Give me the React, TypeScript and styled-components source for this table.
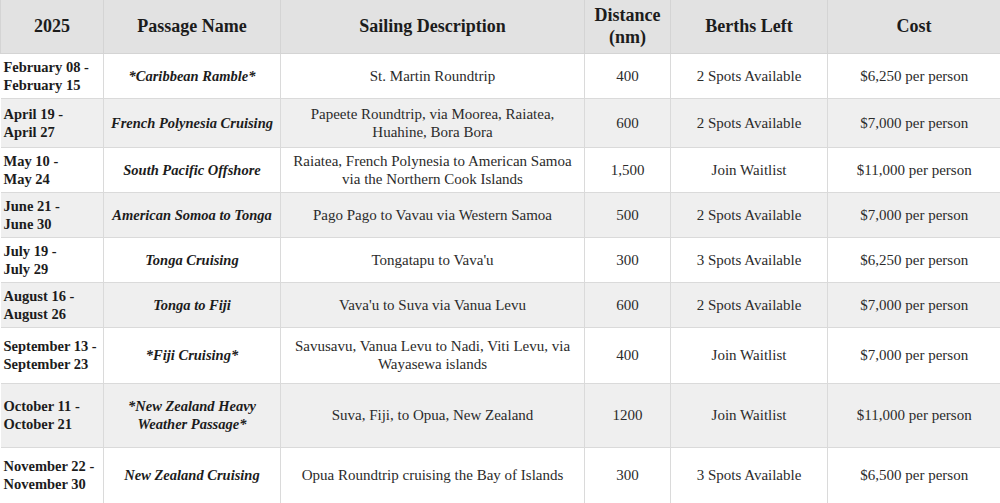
import React from "react";
import styled, { createGlobalStyle } from "styled-components";

interface Passage {
  dates: [string, string];
  name: string;
  description: string;
  distance: string;
  berths: string;
  cost: string;
  height: number;
}

const passages: Passage[] = [
  { dates: ["February 08 -", "February 15"], name: "*Caribbean Ramble*", description: "St. Martin Roundtrip", distance: "400", berths: "2 Spots Available", cost: "$6,250 per person", height: 45 },
  { dates: ["April 19 -", "April 27"], name: "French Polynesia Cruising", description: "Papeete Roundtrip, via Moorea, Raiatea, Huahine, Bora Bora", distance: "600", berths: "2 Spots Available", cost: "$7,000 per person", height: 49 },
  { dates: ["May 10 -", "May 24"], name: "South Pacific Offshore", description: "Raiatea, French Polynesia to American Samoa via the Northern Cook Islands", distance: "1,500", berths: "Join Waitlist", cost: "$11,000 per person", height: 45 },
  { dates: ["June 21 -", "June 30"], name: "American Somoa to Tonga", description: "Pago Pago to Vavau via Western Samoa", distance: "500", berths: "2 Spots Available", cost: "$7,000 per person", height: 45 },
  { dates: ["July 19 -", "July 29"], name: "Tonga Cruising", description: "Tongatapu to Vava'u", distance: "300", berths: "3 Spots Available", cost: "$6,250 per person", height: 45 },
  { dates: ["August 16 -", "August 26"], name: "Tonga to Fiji", description: "Vava'u to Suva via Vanua Levu", distance: "600", berths: "2 Spots Available", cost: "$7,000 per person", height: 45 },
  { dates: ["September 13 -", "September 23"], name: "*Fiji Cruising*", description: "Savusavu, Vanua Levu to Nadi, Viti Levu, via Wayasewa islands", distance: "400", berths: "Join Waitlist", cost: "$7,000 per person", height: 56 },
  { dates: ["October 11 -", "October 21"], name: "*New Zealand Heavy Weather Passage*", description: "Suva, Fiji, to Opua, New Zealand", distance: "1200", berths: "Join Waitlist", cost: "$11,000 per person", height: 64 },
  { dates: ["November 22 -", "November 30"], name: "New Zealand Cruising", description: "Opua Roundtrip cruising the Bay of Islands", distance: "300", berths: "3 Spots Available", cost: "$6,500 per person", height: 56 },
];

const GlobalStyle = createGlobalStyle`
  html, body {
    margin: 0;
    padding: 0;
    background: #ffffff;
  }
  body {
    font-family: "Liberation Serif", "DejaVu Serif", serif;
  }
`;

const Table = styled.table`
  width: 1000px;
  border-collapse: collapse;
  table-layout: fixed;
  color: #2b2b2b;
  font-size: 15px;
`;

const HeadRow = styled.tr`
  height: 53px;
  background: #e2e2e2;
`;

const HeadCell = styled.th`
  border: 1px solid #d4d4d4;
  border-top: none;
  font-size: 18px;
  font-weight: 700;
  line-height: 22px;
  color: #1c1c1c;
  text-align: center;
  vertical-align: middle;
  padding: 0 6px;
`;

const Row = styled.tr<{ $shaded: boolean; $h: number }>`
  height: ${(p) => p.$h}px;
  background: ${(p) => (p.$shaded ? "#efefef" : "#ffffff")};
`;

const Cell = styled.td`
  border: 1px solid #dadada;
  text-align: center;
  vertical-align: middle;
  line-height: 18px;
  padding: 0 10px;
`;

const DateCell = styled(Cell)`
  text-align: left;
  padding: 0 2px 0 3px;
  font-size: 14.5px;
  font-weight: 700;
  color: #1c1c1c;
  border-left: none;
`;

const NameCell = styled(Cell)`
  font-size: 14.5px;
  font-weight: 700;
  font-style: italic;
  color: #1c1c1c;
  padding: 0 4px;
`;

const LastCell = styled(Cell)`
  border-right: none;
`;

const App: React.FC = () => {
  return (
    <>
      <GlobalStyle />
      <Table>
        <colgroup>
          <col style={{ width: 103 }} />
          <col style={{ width: 177 }} />
          <col style={{ width: 304 }} />
          <col style={{ width: 86 }} />
          <col style={{ width: 157 }} />
          <col style={{ width: 173 }} />
        </colgroup>
        <thead>
          <HeadRow>
            <HeadCell>2025</HeadCell>
            <HeadCell>Passage Name</HeadCell>
            <HeadCell>Sailing Description</HeadCell>
            <HeadCell>Distance (nm)</HeadCell>
            <HeadCell>Berths Left</HeadCell>
            <HeadCell>Cost</HeadCell>
          </HeadRow>
        </thead>
        <tbody>
          {passages.map((p, i) => (
            <Row key={p.name} $shaded={i % 2 === 1} $h={p.height}>
              <DateCell>
                {p.dates[0]}
                <br />
                {p.dates[1]}
              </DateCell>
              <NameCell>{p.name}</NameCell>
              <Cell>{p.description}</Cell>
              <Cell>{p.distance}</Cell>
              <Cell>{p.berths}</Cell>
              <LastCell>{p.cost}</LastCell>
            </Row>
          ))}
        </tbody>
      </Table>
    </>
  );
};

export default App;
